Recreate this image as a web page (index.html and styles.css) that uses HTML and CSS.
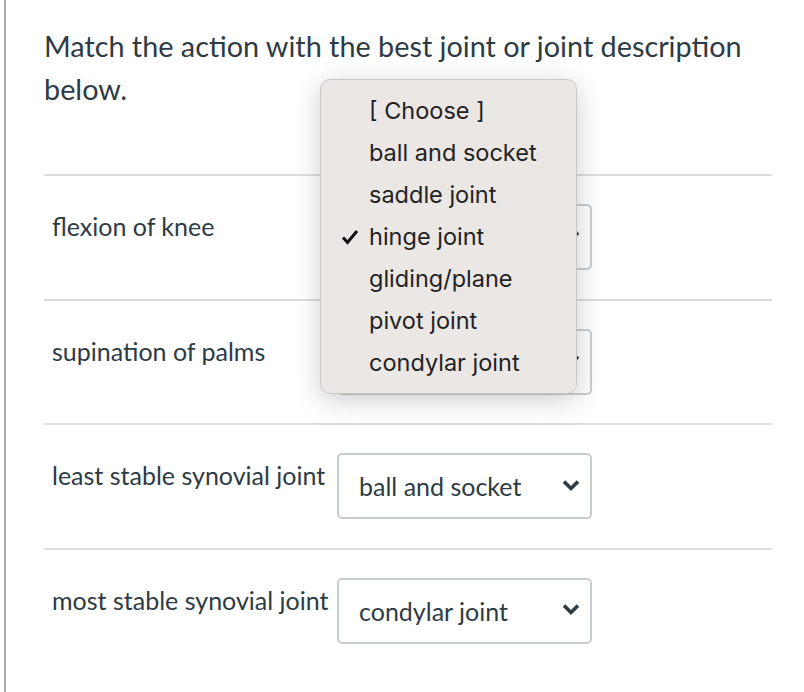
FILE: index.html
```html
<!DOCTYPE html>
<html lang="en">
<head>
    <meta charset="UTF-8">
    <title>Matching question</title>
    <link rel="stylesheet" href="styles.css">
</head>
<body>
    <div class="question">
        <p class="question-text">Match the action with the best joint or joint description below.</p>

        <div class="answer-row">
            <div class="answer-label">flexion of knee</div>
            <div class="answer-select"><span>hinge joint</span><svg class="chevron" viewBox="0 0 18 13"><polyline points="2,2.5 9,9.5 16,2.5"/></svg></div>
        </div>
        <div class="answer-row">
            <div class="answer-label">supination of palms</div>
            <div class="answer-select"><span>pivot joint</span><svg class="chevron" viewBox="0 0 18 13"><polyline points="2,2.5 9,9.5 16,2.5"/></svg></div>
        </div>
        <div class="answer-row">
            <div class="answer-label">least stable synovial joint</div>
            <div class="answer-select"><span>ball and socket</span><svg class="chevron" viewBox="0 0 18 13"><polyline points="2,2.5 9,9.5 16,2.5"/></svg></div>
        </div>
        <div class="answer-row">
            <div class="answer-label">most stable synovial joint</div>
            <div class="answer-select"><span>condylar joint</span><svg class="chevron" viewBox="0 0 18 13"><polyline points="2,2.5 9,9.5 16,2.5"/></svg></div>
        </div>

        <!-- open option list of the first select -->
        <ul class="option-menu">
            <li>[ Choose ]</li>
            <li>ball and socket</li>
            <li>saddle joint</li>
            <li class="checked"><svg class="check" viewBox="0 0 18 16"><polyline points="2,8.5 6.5,13.5 16,2"/></svg>hinge joint</li>
            <li>gliding/plane</li>
            <li>pivot joint</li>
            <li>condylar joint</li>
        </ul>
    </div>
</body>
</html>
```
FILE: styles.css
```css
body {
    margin: 0;
    background: #fff;
    font-family: Lato, "Liberation Sans", sans-serif;
    color: #2d3b45;
}
.question {
    position: relative;
    margin-left: 4px;
    border-left: 2px solid #aaa;
    padding: 25px 32px 48px 38px;
    min-height: 619px;
}
.question-text {
    margin: 0 0 63px 0;
    font-size: 28.8px;
    line-height: 43px;
    width: 720px;
}
.answer-row {
    display: flex;
    align-items: flex-start;
    border-top: 2px solid #ddd;
    height: 122.5px;
}
.answer-label {
    width: 285px;
    padding: 35px 0 0 8px;
    font-size: 25px;
    line-height: 30px;
}
.answer-select {
    display: flex;
    align-items: center;
    justify-content: space-between;
    box-sizing: border-box;
    width: 255px;
    height: 66px;
    margin-top: 28px;
    padding: 0 10px 0 20px;
    border: 2px solid #c7cdd1;
    border-radius: 5px;
    font-size: 25px;
}
.chevron {
    width: 18px;
    height: 13px;
    fill: none;
    stroke: #2d3b45;
    stroke-width: 3.6;
    margin-top: -2px;
}
.option-menu {
    position: absolute;
    left: 314px;
    top: 79px;
    width: 257px;
    box-sizing: border-box;
    margin: 0;
    padding: 10px 0 0 0;
    height: 315px;
    list-style: none;
    background: #ebe7e5;
    border: 1px solid #cbc7c5;
    border-radius: 10px;
    box-shadow: 0 6px 28px rgba(0, 0, 0, 0.2);
    font-family: Inter, "Noto Sans", sans-serif;
    font-size: 23.5px;
    color: #222;
}
.option-menu li {
    height: 42px;
    line-height: 42px;
    padding-left: 48px;
    position: relative;
}
.check {
    position: absolute;
    left: 20px;
    top: 13px;
    width: 18px;
    height: 16px;
    fill: none;
    stroke: #111;
    stroke-width: 3;
}
```
